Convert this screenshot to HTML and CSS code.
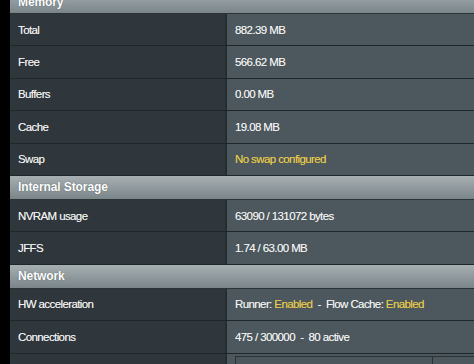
FILE: index.html
```html
<!DOCTYPE html>
<html>
<head>
<meta charset="utf-8">
<link rel="stylesheet" href="styles.css">
</head>
<body>
<div class="page">
  <div class="strip"></div>
  <div class="panel">
    <div class="head">Memory</div>
    <div class="row"><div class="lab">Total</div><div class="val">882.39 MB</div></div>
    <div class="row"><div class="lab">Free</div><div class="val">566.62 MB</div></div>
    <div class="row"><div class="lab">Buffers</div><div class="val">0.00 MB</div></div>
    <div class="row"><div class="lab">Cache</div><div class="val">19.08 MB</div></div>
    <div class="row"><div class="lab">Swap</div><div class="val"><span class="hi">No swap configured</span></div></div>
    <div class="head">Internal Storage</div>
    <div class="row"><div class="lab">NVRAM usage</div><div class="val">63090 / 131072 bytes</div></div>
    <div class="row"><div class="lab">JFFS</div><div class="val">1.74 / 63.00 MB</div></div>
    <div class="head">Network</div>
    <div class="row"><div class="lab">HW acceleration</div><div class="val">Runner: <span class="hi">Enabled</span>&nbsp; - &nbsp;Flow Cache: <span class="hi">Enabled</span></div></div>
    <div class="row"><div class="lab">Connections</div><div class="val">475 / 300000&nbsp; - &nbsp;80 active</div></div>
    <div class="row tall"><div class="lab"></div><div class="val box-cell"><div class="box"><div class="box-a"></div><div class="box-b"></div></div></div></div>
  </div>
</div>
</body>
</html>
```

FILE: styles.css
```css
html, body {
  margin: 0;
  padding: 0;
  background: #000;
  overflow: hidden;
}
.page {
  display: flex;
  margin-top: -10px;
  font-family: "Liberation Sans", Arial, sans-serif;
  color: #f4f4f4;
}
.strip {
  width: 10px;
  flex: none;
  background: #000;
}
.panel {
  flex: 1;
  display: flex;
  flex-direction: column;
  background: #30373b;
}
.head {
  box-sizing: border-box;
  height: 24px;
  padding-left: 8px;
  display: flex;
  align-items: center;
  font-size: 12px;
  font-weight: bold;
  letter-spacing: -0.1px;
  color: #fff;
  text-shadow: 0 0 1px rgba(40, 50, 55, 0.7);
  background: linear-gradient(#a7afb2, #7a858a);
  border-bottom: 1px solid #2b3337;
}
.row {
  box-sizing: border-box;
  height: 32.4px;
  display: grid;
  grid-template-columns: 217px 1fr;
  border-bottom: 1px solid #20272a;
  font-size: 11.5px;
  letter-spacing: -0.6px;
  text-shadow: 0 0 0.6px rgba(255, 255, 255, 0.5);
}
.lab {
  background: #30373c;
  border-right: 2px solid #262d31;
  padding-left: 8px;
  display: flex;
  align-items: center;
}
.val {
  background: #4c585d;
  padding-left: 8px;
  display: flex;
  align-items: center;
  white-space: pre;
}
.hi {
  color: #ebcb4a;
  text-shadow: 0 0 0.6px rgba(235, 203, 74, 0.5);
}
.tall {
  height: 40px;
  border-bottom: none;
}
.box-cell {
  align-items: flex-start;
  padding-top: 2px;
}
.box {
  display: flex;
  width: 100%;
  height: 30px;
  border-top: 1px solid #2a3236;
  border-left: 1px solid #2a3236;
}
.box-a {
  width: 196px;
  border-right: 1px solid #2a3236;
  background: #4a565b;
}
.box-b {
  flex: 1;
  background: #4c585d;
}
```
